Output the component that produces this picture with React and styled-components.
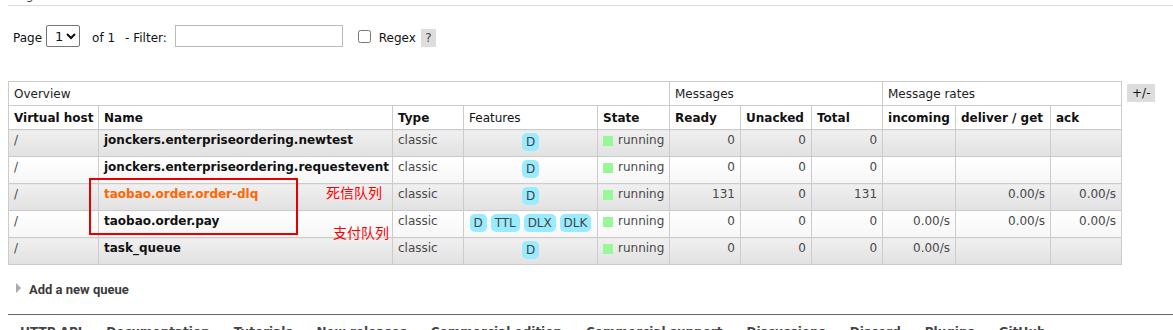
import React from 'react';
import styled, { createGlobalStyle } from 'styled-components';

const Global = createGlobalStyle`
  html, body { margin: 0; padding: 0; background: #fff; }
  body {
    font-family: "DejaVu Sans", Verdana, sans-serif;
    font-size: 12px;
    color: #222;
  }
`;

const Main = styled.div`
  padding-left: 8px;
`;

const SectionTitle = styled.h3`
  margin: -12px 0 0 0;
  padding: 0 0 3px 4px;
  font-size: 12px;
  font-weight: normal;
  line-height: 14px;
  color: #444;
  border-bottom: 1px solid #ddd;
`;

const Controls = styled.div`
  margin-top: 19px;
  height: 22px;
  display: flex;
  align-items: center;
  padding-left: 5px;
  line-height: 14px;
`;

const Label = styled.span`
  margin-left: ${(p) => p.$ml || 0}px;
  padding-top: 4px;
  color: #111;
`;

const PageSelect = styled.select`
  margin: 0 0 0 4px;
  width: 34px;
  height: 22px;
  font-family: "DejaVu Sans", Verdana, sans-serif;
  font-size: 13px;
  color: #111;
  border: 1px solid #767676;
  border-radius: 2px;
  background: #fff;
  padding: 0 0 0 4px;
`;

const FilterInput = styled.input`
  margin: 0 0 0 8px;
  width: 168px;
  height: 22px;
  box-sizing: border-box;
  border: 1px solid #bbb;
  padding: 0 4px;
  font-size: 12px;
`;

const Check = styled.input`
  margin: 0 0 0 15px;
  width: 13px;
  height: 13px;
`;

const Help = styled.span`
  margin-left: 5px;
  margin-top: 4px;
  padding: 2px 4.5px;
  line-height: 14px;
  background: #ddd;
  color: #444;
`;

const TableWrap = styled.div`
  position: relative;
  margin-top: 34px;
  display: flex;
  align-items: flex-start;
  gap: 5px;
`;

const Table = styled.table`
  flex: none;
  border-collapse: collapse;
  table-layout: fixed;
  width: 1114px;
`;

const Col = styled.col`
  width: ${(p) => p.$w}px;
`;

const GroupTh = styled.th`
  border: 1px solid #ccc;
  padding: 5px 5px 3px;
  line-height: 15px;
  text-align: left;
  font-weight: normal;
  color: #222;
  background: #fff;
  white-space: nowrap;
`;

const HeadTh = styled.th`
  border: 1px solid #ccc;
  padding: 5px 5px 3px;
  line-height: 15px;
  text-align: left;
  font-weight: ${(p) => (p.$plain ? 'normal' : 'bold')};
  color: #111;
  background: #fff;
  white-space: nowrap;
`;

const Row = styled.tr`
  & > td {
    background: ${(p) =>
      p.$alt
        ? 'linear-gradient(#f0f0f0, #e1e1e1)'
        : 'linear-gradient(#ffffff, #f6f6f6)'};
  }
`;

const Td = styled.td`
  border: 1px solid #ccc;
  padding: 3px 5px 5px;
  line-height: 14px;
  vertical-align: top;
  text-align: ${(p) => p.$align || 'left'};
  white-space: nowrap;
  color: #484848;
`;

const NameText = styled.span`
  font-weight: bold;
  color: ${(p) => (p.$hot ? '#f60' : '#111')};
`;

const Badge = styled.span`
  display: inline-block;
  height: 18px;
  line-height: 18px;
  padding: 0 4px;
  border-radius: 5px;
  background: #99ebff;
  color: #444;
`;

const StateDot = styled.span`
  display: inline-block;
  width: 10px;
  height: 10px;
  margin-right: 5px;
  vertical-align: -2px;
  background: #98f898;
`;

const ToggleCols = styled.span`
  margin-top: 3px;
  padding: 2px 5px;
  line-height: 14px;
  background: #ddd;
  color: #111;
`;

const Highlight = styled.div`
  position: absolute;
  left: 81px;
  top: 97px;
  width: 209px;
  height: 57px;
  box-sizing: border-box;
  border: 2px solid #e60000;
  pointer-events: none;
`;

const Note = styled.span`
  position: absolute;
  left: ${(p) => p.$x}px;
  top: ${(p) => p.$y}px;
  font-family: "Noto Sans CJK SC", sans-serif;
  font-size: 14px;
  line-height: 14px;
  color: #f00;
  white-space: nowrap;
`;

const AddQueue = styled.div`
  margin-top: 18px;
  display: flex;
  align-items: flex-start;
  gap: 8px;
  padding-left: 8px;
`;

const Arrow = styled.span`
  width: 0;
  height: 0;
  border-left: 5px solid #aaa;
  border-top: 5.5px solid transparent;
  border-bottom: 5.5px solid transparent;
`;

const AddQueueText = styled.span`
  font-family: Roboto, "Liberation Sans", sans-serif;
  font-weight: bold;
  font-size: 13px;
  line-height: 14px;
  color: #3c3c3c;
`;

const Footer = styled.footer`
  margin-top: 17px;
  border-top: 1px solid #666;
  padding-top: 10px;
  display: flex;
`;

const FooterLink = styled.span`
  margin: 0 12px;
  font-weight: bold;
  line-height: 14px;
  color: #444;
  white-space: nowrap;
`;

const COLS = [
  { label: 'Virtual host', w: 90 },
  { label: 'Name', w: 294 },
  { label: 'Type', w: 71 },
  { label: 'Features', w: 134, plain: true },
  { label: 'State', w: 72 },
  { label: 'Ready', w: 71 },
  { label: 'Unacked', w: 71 },
  { label: 'Total', w: 71 },
  { label: 'incoming', w: 73 },
  { label: 'deliver / get', w: 95 },
  { label: 'ack', w: 71 },
];

const ROWS = [
  { name: 'jonckers.enterpriseordering.newtest', features: ['D'], ready: '0', unacked: '0', total: '0', incoming: '', deliver: '', ack: '' },
  { name: 'jonckers.enterpriseordering.requestevent', features: ['D'], ready: '0', unacked: '0', total: '0', incoming: '', deliver: '', ack: '' },
  { name: 'taobao.order.order-dlq', hot: true, features: ['D'], ready: '131', unacked: '0', total: '131', incoming: '', deliver: '0.00/s', ack: '0.00/s' },
  { name: 'taobao.order.pay', features: ['D', 'TTL', 'DLX', 'DLK'], ready: '0', unacked: '0', total: '0', incoming: '0.00/s', deliver: '0.00/s', ack: '0.00/s' },
  { name: 'task_queue', features: ['D'], ready: '0', unacked: '0', total: '0', incoming: '0.00/s', deliver: '', ack: '' },
];

const FOOTER = [
  'HTTP API',
  'Documentation',
  'Tutorials',
  'New releases',
  'Commercial edition',
  'Commercial support',
  'Discussions',
  'Discord',
  'Plugins',
  'GitHub',
];

export default function App() {
  return (
    <Main>
      <Global />
      <SectionTitle>Pagination</SectionTitle>
      <Controls>
        <Label>Page</Label>
        <PageSelect defaultValue="1">
          <option value="1">1</option>
        </PageSelect>
        <Label $ml={12}>of 1</Label>
        <Label $ml={10}>- Filter:</Label>
        <FilterInput type="text" />
        <Check type="checkbox" />
        <Label $ml={8}>Regex</Label>
        <Help>?</Help>
      </Controls>

      <TableWrap>
        <Table>
          <colgroup>
            {COLS.map((c) => (
              <Col key={c.label} $w={c.w} />
            ))}
          </colgroup>
          <thead>
            <tr>
              <GroupTh colSpan={5}>Overview</GroupTh>
              <GroupTh colSpan={3}>Messages</GroupTh>
              <GroupTh colSpan={3}>Message rates</GroupTh>
            </tr>
            <tr>
              {COLS.map((c) => (
                <HeadTh key={c.label} $plain={c.plain}>
                  {c.label}
                </HeadTh>
              ))}
            </tr>
          </thead>
          <tbody>
            {ROWS.map((r, i) => (
              <Row key={r.name} $alt={i % 2 === 0}>
                <Td>/</Td>
                <Td>
                  <NameText $hot={r.hot}>{r.name}</NameText>
                </Td>
                <Td>classic</Td>
                <Td $align="center">
                  {r.features.map((f, j) => (
                    <React.Fragment key={f}>
                      {j > 0 && ' '}
                      <Badge>{f}</Badge>
                    </React.Fragment>
                  ))}
                </Td>
                <Td>
                  <StateDot />
                  running
                </Td>
                <Td $align="right">{r.ready}</Td>
                <Td $align="right">{r.unacked}</Td>
                <Td $align="right">{r.total}</Td>
                <Td $align="right">{r.incoming}</Td>
                <Td $align="right">{r.deliver}</Td>
                <Td $align="right">{r.ack}</Td>
              </Row>
            ))}
          </tbody>
        </Table>
        <ToggleCols>+/-</ToggleCols>
        <Highlight />
        <Note $x={318} $y={104}>死信队列</Note>
        <Note $x={325} $y={144}>支付队列</Note>
      </TableWrap>

      <AddQueue>
        <Arrow />
        <AddQueueText>Add a new queue</AddQueueText>
      </AddQueue>

      <Footer>
        {FOOTER.map((f) => (
          <FooterLink key={f}>{f}</FooterLink>
        ))}
      </Footer>
    </Main>
  );
}
